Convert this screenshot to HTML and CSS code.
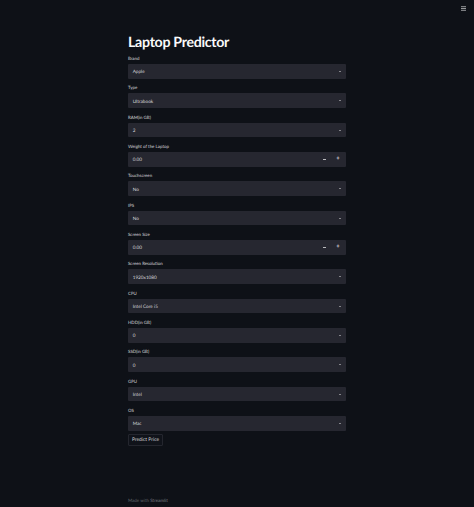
FILE: index.html
```html
<!DOCTYPE html>
<html lang="en">
<head>
<meta charset="utf-8">
<title>Laptop Predictor</title>
<link rel="stylesheet" href="styles.css">
</head>
<body>
<button class="menu" aria-label="Menu"><svg width="5" height="5" viewBox="0 0 5 5"><path d="M0 .7h5M0 2.5h5M0 4.3h5" stroke="#b9babd" stroke-width=".8"/></svg></button>
<main class="app">
  <h1>Laptop Predictor</h1>
  <div class="field"><label>Brand</label><div class="box"><span>Apple</span><i class="caret"></i></div></div>
  <div class="field"><label>Type</label><div class="box"><span>Ultrabook</span><i class="caret"></i></div></div>
  <div class="field"><label>RAM(in GB)</label><div class="box"><span>2</span><i class="caret"></i></div></div>
  <div class="field"><label>Weight of the Laptop</label><div class="box"><span>0.00</span><b class="step minus"></b><b class="step">+</b></div></div>
  <div class="field"><label>Touchscreen</label><div class="box"><span>No</span><i class="caret"></i></div></div>
  <div class="field"><label>IPS</label><div class="box"><span>No</span><i class="caret"></i></div></div>
  <div class="field"><label>Screen Size</label><div class="box"><span>0.00</span><b class="step minus"></b><b class="step">+</b></div></div>
  <div class="field"><label>Screen Resolution</label><div class="box"><span>1920x1080</span><i class="caret"></i></div></div>
  <div class="field"><label>CPU</label><div class="box"><span>Intel Core i5</span><i class="caret"></i></div></div>
  <div class="field"><label>HDD(in GB)</label><div class="box"><span>0</span><i class="caret"></i></div></div>
  <div class="field"><label>SSD(in GB)</label><div class="box"><span>0</span><i class="caret"></i></div></div>
  <div class="field"><label>GPU</label><div class="box"><span>Intel</span><i class="caret"></i></div></div>
  <div class="field"><label>OS</label><div class="box"><span>Mac</span><i class="caret"></i></div></div>
  <button class="predict">Predict Price</button>
</main>
<footer class="foot">Made with <span>Streamlit</span></footer>
</body>
</html>
```
FILE: styles.css
```css
html, body { margin: 0; height: 100%; }
body {
  background: #0e1117;
  color: #fafafa;
  font-family: "Lato", "Noto Sans", sans-serif;
  text-rendering: geometricPrecision;
  width: 474px;
  height: 507px;
  overflow: hidden;
  display: flex;
  flex-direction: column;
  position: relative;
}
.menu {
  position: absolute;
  top: 6px;
  right: 8.5px;
  width: 5px;
  height: 5px;
  padding: 0;
  border: 0;
  background: none;
  display: flex;
  align-items: center;
  justify-content: center;
}
.app {
  width: 217.5px;
  margin-left: 128px;
  padding-top: 35px;
  display: flex;
  flex-direction: column;
  flex: 1;
}
h1 {
  margin: 0 0 4px;
  font-size: 14.2px;
  line-height: 16px;
  font-weight: 700;
  height: 16px;
  letter-spacing: -0.3px;
  color: #fafafa;
}
.field {
  height: 29.35px;
  display: flex;
  flex-direction: column;
}
label {
  font-size: 4.4px;
  line-height: 7px;
  height: 9px;
  color: #d9d9dc;
}
.box {
  height: 14.7px;
  background: #262730;
  border-radius: 1px;
  display: flex;
  align-items: center;
  padding: 0 3.5px 0 4.7px;
  font-size: 4.7px;
  color: #d9d9dc;
}
.box span { flex: 1; }
.caret {
  width: 0;
  height: 0;
  margin-right: 1px;
  border-left: 1.4px solid transparent;
  border-right: 1.4px solid transparent;
  border-top: 1.6px solid #e4e4e6;
}
.step {
  width: 14px;
  text-align: center;
  font-size: 6px;
  font-weight: 700;
  line-height: 6px;
  color: #d9d9dc;
}
.step:last-child { margin-right: -3px; }
.minus {
  height: 1px;
  background: linear-gradient(#b9babd, #b9babd) center / 3px 1px no-repeat;
}
.predict {
  align-self: flex-start;
  margin-top: -2.5px;
  width: 35px;
  height: 12.5px;
  padding: 0;
  background: #10131a;
  border: 0.5px solid #24262e;
  border-radius: 1px;
  font-family: inherit;
  text-rendering: geometricPrecision;
  font-size: 4.9px;
  color: #d9d9dc;
}
.foot {
  position: absolute;
  left: 128px;
  top: 498px;
  font-size: 4.5px;
  line-height: 6px;
  color: #5f6268;
}
.foot span { color: #7c7f85; }
```
